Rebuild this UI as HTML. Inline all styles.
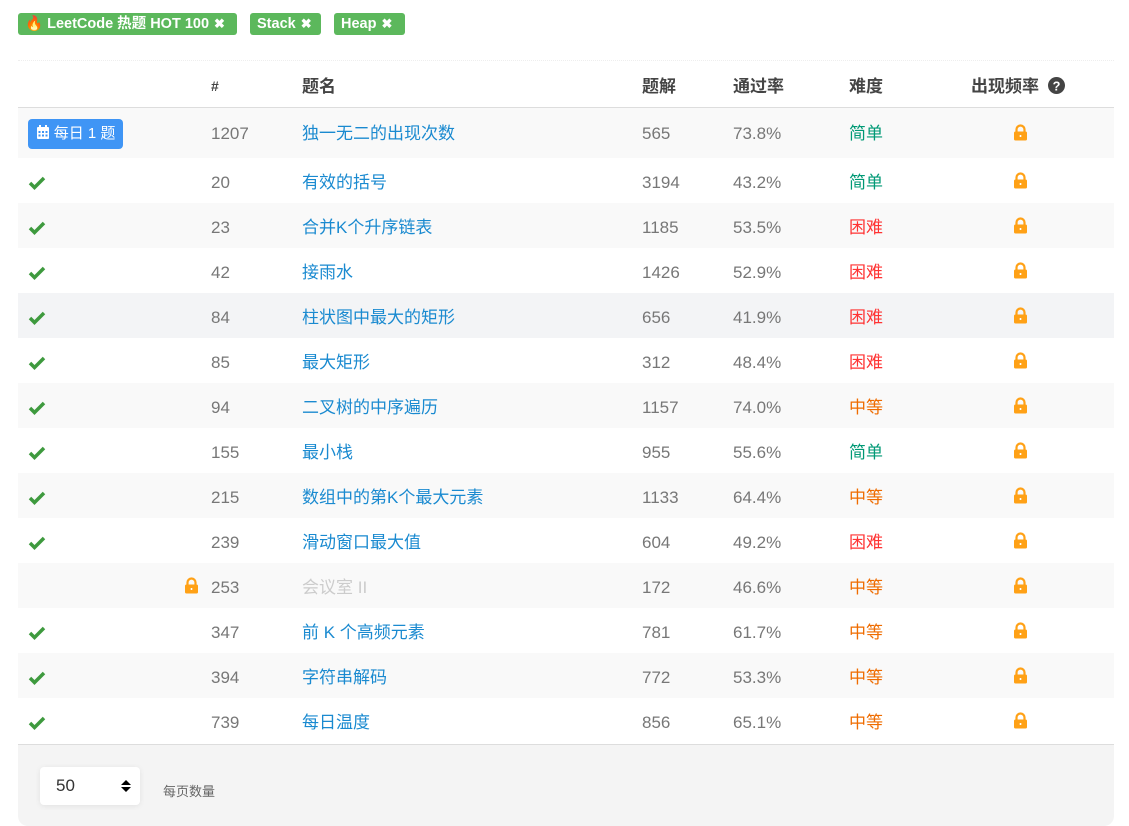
<!DOCTYPE html>
<html><head><meta charset="utf-8"><style>
body{margin:0;background:#fff;font-family:"Liberation Sans","Noto Sans CJK SC",sans-serif;width:1129px;height:826px;overflow:hidden;position:relative}
.tag{position:absolute;top:13px;height:22px;background:#5cb85c;color:#fff;font-weight:bold;font-size:14.5px;line-height:22px;border-radius:3px;padding:0 7px;box-sizing:border-box;white-space:nowrap}
.tag .x{margin-left:5px;font-size:13px}
.hdrline{position:absolute;left:18px;width:1096px;top:60px;border-top:1px dotted #eee}
.row{position:absolute;left:18px;width:1096px;height:45px;font-size:17px;color:#777}
.row span{position:absolute;top:2px;line-height:45px}
.row.f span{line-height:48px}
.h span{font-weight:bold;color:#444;font-size:17px}
.t{color:#1a8ad0}
.e{color:#009975}.m{color:#ef6c00}.hd{color:#f33}
.lk{position:absolute;left:994px;top:14px;width:17px;height:17px}
.f .lk{top:16px}
.chk{position:absolute;left:10px;top:17px}
.c1{left:193px}.c2{left:284px}.c3{left:624px}.c4{left:715px}.c5{left:831px}
.s{background:#f9f9f9}
</style></head><body>
<svg width="0" height="0" style="position:absolute"><defs>
<g id="L"><path d="M4.5 8V5.5a4 4 0 0 1 8 0V8" stroke="#ffa116" stroke-width="2.2" fill="none"/><rect x="2" y="7.5" width="13" height="9" rx="1.5" fill="#ffa116"/><rect x="7.7" y="11" width="1.6" height="2" fill="#fff"/></g>
<g id="C"><path d="M2 8l4.5 4.5L16 3" stroke="#3e9a3e" stroke-width="3.5" fill="none"/></g>
</defs></svg>
<div class="tag" style="left:18px;width:219px">🔥 LeetCode 热题 HOT 100<span class="x">✖</span></div>
<div class="tag" style="left:250px;width:71px">Stack<span class="x">✖</span></div>
<div class="tag" style="left:334px;width:71px">Heap<span class="x">✖</span></div>
<div class="hdrline"></div>
<div class="row h" style="top:62px;border-bottom:1px solid #ddd;height:45px">
<span class="c1" style="font-size:14px">#</span><span class="c2">题名</span><span class="c3">题解</span><span class="c4">通过率</span><span class="c5">难度</span><span style="left:953px">出现频率 <svg width="17" height="17" viewBox="0 0 16 16" style="vertical-align:-2px;margin-left:4px"><circle cx="8" cy="8" r="8" fill="#444"/><text x="8" y="12.5" font-size="12" font-weight="bold" fill="#fff" text-anchor="middle" font-family="Liberation Sans">?</text></svg></span>
</div>

<div class="row f s" style="top:108px;height:50px"><div style="position:absolute;left:10px;top:11px;width:95px;height:30px;background:#3f95f5;border-radius:4px;color:#fff;font-size:15px;line-height:30px;text-align:center"><svg width="14" height="15" viewBox="0 0 14 15" style="vertical-align:-2px"><rect x="1" y="2" width="12" height="12" rx="1" fill="#fff"/><g fill="#3f95f5"><rect x="2.5" y="6" width="2" height="2"/><rect x="6" y="6" width="2" height="2"/><rect x="9.5" y="6" width="2" height="2"/><rect x="2.5" y="9.5" width="2" height="2"/><rect x="6" y="9.5" width="2" height="2"/><rect x="9.5" y="9.5" width="2" height="2"/></g><rect x="3" y="0" width="2" height="3.5" fill="#fff"/><rect x="9" y="0" width="2" height="3.5" fill="#fff"/></svg> 每日 1 题</div><span class="c1">1207</span><span class="c2 t">独一无二的出现次数</span><span class="c3">565</span><span class="c4">73.8%</span><span class="c5 e">简单</span><svg class="lk"><use href="#L"/></svg></div>

<div class="row" style="top:158px"><svg class="chk" width="18" height="15"><use href="#C"/></svg><span class="c1">20</span><span class="c2 t">有效的括号</span><span class="c3">3194</span><span class="c4">43.2%</span><span class="c5 e">简单</span><svg class="lk"><use href="#L"/></svg></div>
<div class="row s" style="top:203px"><svg class="chk" width="18" height="15"><use href="#C"/></svg><span class="c1">23</span><span class="c2 t">合并K个升序链表</span><span class="c3">1185</span><span class="c4">53.5%</span><span class="c5 hd">困难</span><svg class="lk"><use href="#L"/></svg></div>
<div class="row" style="top:248px"><svg class="chk" width="18" height="15"><use href="#C"/></svg><span class="c1">42</span><span class="c2 t">接雨水</span><span class="c3">1426</span><span class="c4">52.9%</span><span class="c5 hd">困难</span><svg class="lk"><use href="#L"/></svg></div>
<div class="row" style="top:293px;background:#f3f4f6"><svg class="chk" width="18" height="15"><use href="#C"/></svg><span class="c1">84</span><span class="c2 t">柱状图中最大的矩形</span><span class="c3">656</span><span class="c4">41.9%</span><span class="c5 hd">困难</span><svg class="lk"><use href="#L"/></svg></div>
<div class="row" style="top:338px"><svg class="chk" width="18" height="15"><use href="#C"/></svg><span class="c1">85</span><span class="c2 t">最大矩形</span><span class="c3">312</span><span class="c4">48.4%</span><span class="c5 hd">困难</span><svg class="lk"><use href="#L"/></svg></div>
<div class="row s" style="top:383px"><svg class="chk" width="18" height="15"><use href="#C"/></svg><span class="c1">94</span><span class="c2 t">二叉树的中序遍历</span><span class="c3">1157</span><span class="c4">74.0%</span><span class="c5 m">中等</span><svg class="lk"><use href="#L"/></svg></div>
<div class="row" style="top:428px"><svg class="chk" width="18" height="15"><use href="#C"/></svg><span class="c1">155</span><span class="c2 t">最小栈</span><span class="c3">955</span><span class="c4">55.6%</span><span class="c5 e">简单</span><svg class="lk"><use href="#L"/></svg></div>
<div class="row s" style="top:473px"><svg class="chk" width="18" height="15"><use href="#C"/></svg><span class="c1">215</span><span class="c2 t">数组中的第K个最大元素</span><span class="c3">1133</span><span class="c4">64.4%</span><span class="c5 m">中等</span><svg class="lk"><use href="#L"/></svg></div>
<div class="row" style="top:518px"><svg class="chk" width="18" height="15"><use href="#C"/></svg><span class="c1">239</span><span class="c2 t">滑动窗口最大值</span><span class="c3">604</span><span class="c4">49.2%</span><span class="c5 hd">困难</span><svg class="lk"><use href="#L"/></svg></div>
<div class="row s" style="top:563px"><svg class="lk" style="left:165px"><use href="#L"/></svg><span class="c1">253</span><span class="c2" style="color:#ccc">会议室 II</span><span class="c3">172</span><span class="c4">46.6%</span><span class="c5 m">中等</span><svg class="lk"><use href="#L"/></svg></div>
<div class="row" style="top:608px"><svg class="chk" width="18" height="15"><use href="#C"/></svg><span class="c1">347</span><span class="c2 t">前 K 个高频元素</span><span class="c3">781</span><span class="c4">61.7%</span><span class="c5 m">中等</span><svg class="lk"><use href="#L"/></svg></div>
<div class="row s" style="top:653px"><svg class="chk" width="18" height="15"><use href="#C"/></svg><span class="c1">394</span><span class="c2 t">字符串解码</span><span class="c3">772</span><span class="c4">53.3%</span><span class="c5 m">中等</span><svg class="lk"><use href="#L"/></svg></div>
<div class="row" style="top:698px"><svg class="chk" width="18" height="15"><use href="#C"/></svg><span class="c1">739</span><span class="c2 t">每日温度</span><span class="c3">856</span><span class="c4">65.1%</span><span class="c5 m">中等</span><svg class="lk"><use href="#L"/></svg></div>

<div style="position:absolute;left:18px;top:744px;width:1096px;height:82px;background:#f4f4f4;border-top:1px solid #ddd;border-radius:0 0 10px 10px;box-sizing:border-box">
<div style="position:absolute;left:22px;top:22px;width:100px;height:38px;background:#fff;border-radius:4px;box-shadow:0 1px 6px rgba(0,0,0,.08);font-size:17px;line-height:38px;color:#333;padding-left:16px;box-sizing:border-box">50<svg style="position:absolute;right:8px;top:12px" width="12" height="14" viewBox="0 0 12 14"><path d="M1 6L6 1L11 6Z M1 8L6 13L11 8Z" fill="#000"/></svg></div>
<div style="position:absolute;left:145px;top:36px;font-size:13px;color:#666">每页数量</div>
</div>
</body></html>
